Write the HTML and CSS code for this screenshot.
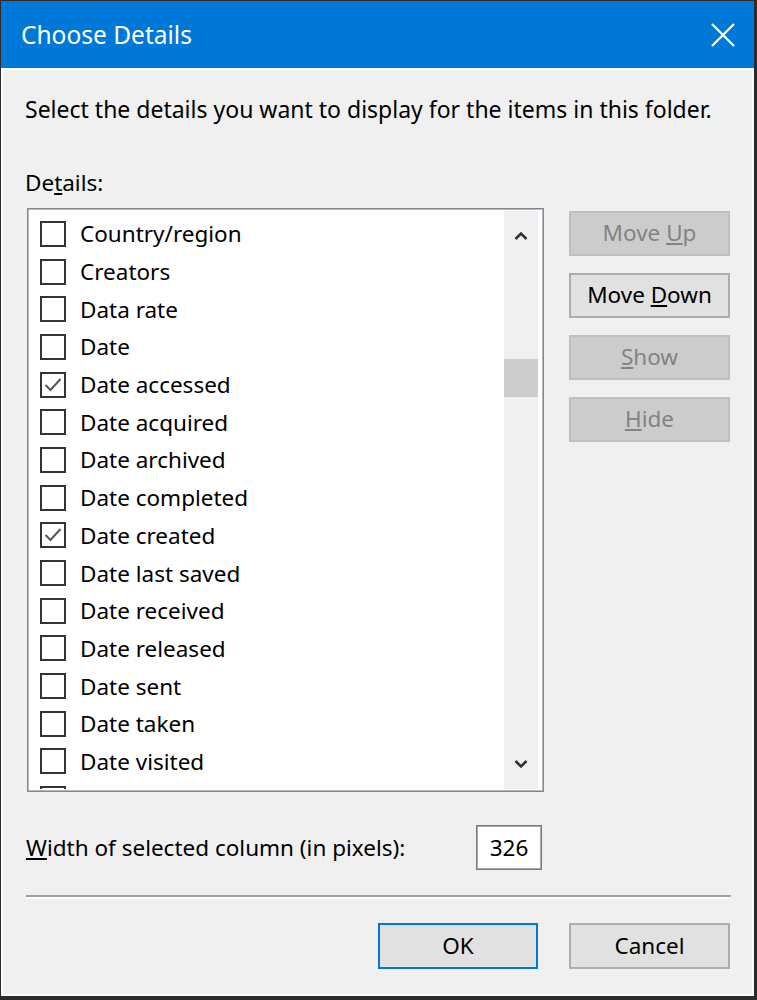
FILE: index.html
```html
<!DOCTYPE html>
<html>
<head>
<meta charset="utf-8">
<link rel="stylesheet" href="styles.css">
</head>
<body>
<div class="window">
  <div class="titlebar">
    <span class="title">Choose Details</span>
    <svg class="close" width="24" height="24" viewBox="0 0 24 24"><path d="M1 1 L23 23 M23 1 L1 23" stroke="#fff" stroke-width="2.2" fill="none"/></svg>
  </div>
  <div class="content">
    <p class="desc">Select the details you want to display for the items in this folder.</p>
    <p class="label">De<u>t</u>ails:</p>
    <div class="main">
      <div class="listbox">
        <div class="items">
          <div class="row"><span class="cb"></span><span>Country/region</span></div>
          <div class="row"><span class="cb"></span><span>Creators</span></div>
          <div class="row"><span class="cb"></span><span>Data rate</span></div>
          <div class="row"><span class="cb"></span><span>Date</span></div>
          <div class="row"><span class="cb checked"><svg width="22" height="22" viewBox="0 0 22 22"><path d="M3.5 11 L8.5 16 L18.5 5" stroke="#555" stroke-width="2" fill="none"/></svg></span><span>Date accessed</span></div>
          <div class="row"><span class="cb"></span><span>Date acquired</span></div>
          <div class="row"><span class="cb"></span><span>Date archived</span></div>
          <div class="row"><span class="cb"></span><span>Date completed</span></div>
          <div class="row"><span class="cb checked"><svg width="22" height="22" viewBox="0 0 22 22"><path d="M3.5 11 L8.5 16 L18.5 5" stroke="#555" stroke-width="2" fill="none"/></svg></span><span>Date created</span></div>
          <div class="row"><span class="cb"></span><span>Date last saved</span></div>
          <div class="row"><span class="cb"></span><span>Date received</span></div>
          <div class="row"><span class="cb"></span><span>Date released</span></div>
          <div class="row"><span class="cb"></span><span>Date sent</span></div>
          <div class="row"><span class="cb"></span><span>Date taken</span></div>
          <div class="row"><span class="cb"></span><span>Date visited</span></div>
          <div class="row"><span class="cb"></span></div>
        </div>
        <div class="scrollbar">
          <div class="arrow"><svg width="14" height="10" viewBox="0 0 14 10"><path d="M1.5 8 L7 2.5 L12.5 8" stroke="#333" stroke-width="2.6" fill="none"/></svg></div>
          <div class="track"><div class="thumb"></div></div>
          <div class="arrow"><svg width="14" height="10" viewBox="0 0 14 10"><path d="M1.5 2 L7 7.5 L12.5 2" stroke="#333" stroke-width="2.6" fill="none"/></svg></div>
        </div>
      </div>
      <div class="buttons">
        <div class="btn disabled"><span>Move <u>U</u>p</span></div>
        <div class="btn"><span>Move <u>D</u>own</span></div>
        <div class="btn disabled"><span><u>S</u>how</span></div>
        <div class="btn disabled"><span><u>H</u>ide</span></div>
      </div>
    </div>
    <div class="widthrow">
      <span><u>W</u>idth of selected column (in pixels):</span>
      <div class="input">326</div>
    </div>
    <div class="sep"></div>
    <div class="footer">
      <div class="btn ok">OK</div>
      <div class="btn">Cancel</div>
    </div>
  </div>
</div>
</body>
</html>
```
FILE: styles.css
```css
* { box-sizing: border-box; }
html, body { margin: 0; padding: 0; background: #f0f0f0; }
body {
  font-family: "Noto Sans", "Open Sans", sans-serif;
  font-size: 22.5px;
  color: #000;
}
.window {
  width: 757px;
  height: 1000px;
  border-top: 1px solid #2b2b2b;
  border-left: 1px solid #2b2b2b;
  border-right: 3px solid #2b2b2b;
  border-bottom: 4px solid #2b2b2b;
  display: flex;
  flex-direction: column;
  overflow: hidden;
}
.titlebar {
  height: 69px;
  flex: none;
  background: #0078d7;
  display: flex;
  align-items: center;
  justify-content: space-between;
  padding: 0 19px 0 20px;
  border-bottom: 2px solid #fff;
}
.title {
  color: #fff;
  font-size: 24.5px;
  margin-top: -1px;
}
.close { display: block; margin-top: 0; }
.content {
  flex: 1;
  background: #f0f0f0;
  border-left: 2px solid #fbfbfb;
  border-right: 2px solid #fbfbfb;
  border-bottom: 2px solid #fbfbfb;
  padding: 0 21px 0 22px;
}
p { margin: 0; }
.desc { margin-top: 24px; line-height: 30px; font-size: 23px; }
.label { margin-top: 44px; line-height: 30px; }
.main {
  display: flex;
  margin-top: 10px;
  gap: 25px;
}
.listbox {
  margin-left: 2px;
  width: 517px;
  height: 584px;
  border: 1px solid #828790;
  box-shadow: inset 0 0 0 1px #b4b7bd;
  background: #fff;
  display: flex;
  padding: 2px;
}
.items {
  flex: 1;
  overflow: hidden;
  padding-top: 4px;
}
.row {
  height: 37.7px;
  display: flex;
  align-items: center;
  padding-left: 10px;
  gap: 14px;
  white-space: nowrap;
}
.cb {
  width: 26px;
  height: 26px;
  border: 2px solid #333;
  background: #fff;
  flex: none;
  display: flex;
  align-items: center;
  justify-content: center;
}
.cb svg { display: block; }
.scrollbar {
  width: 34px;
  margin-right: 3px;
  background: #f0f0f0;
  display: flex;
  flex-direction: column;
}
.arrow {
  height: 50px;
  display: flex;
  align-items: center;
  justify-content: center;
}
.track { flex: 1; padding-top: 98px; }
.thumb {
  height: 38px;
  background: #cdcdcd;
}
.buttons {
  display: flex;
  flex-direction: column;
  padding-top: 3px;
  gap: 17px;
}
.btn {
  width: 161px;
  height: 45px;
  background: #e1e1e1;
  border: 2px solid #adadad;
  display: flex;
  align-items: center;
  justify-content: center;
  line-height: 1;
  white-space: pre;
}
.btn.disabled {
  background: #cccccc;
  border-color: #bfbfbf;
  color: #838383;
}
.widthrow {
  display: flex;
  align-items: center;
  justify-content: space-between;
  margin-top: 33px;
  padding-left: 1px;
  width: 517px;
}
.input {
  width: 66px;
  height: 45px;
  border: 1px solid #7a7a7a;
  box-shadow: inset 0 0 0 1px #aaa;
  background: #fff;
  display: flex;
  align-items: center;
  justify-content: center;
}
.sep {
  margin-top: 25px;
  margin-left: 1px;
  width: 705px;
  height: 4px;
  border-top: 2px solid #a0a0a0;
  border-bottom: 2px solid #fff;
}
.footer {
  display: flex;
  justify-content: flex-end;
  gap: 31px;
  margin-top: 24px;
  padding-right: 1px;
}
.btn.ok {
  width: 160px;
  border-color: #0078d7;
}
.footer .btn { height: 46px; }
```
